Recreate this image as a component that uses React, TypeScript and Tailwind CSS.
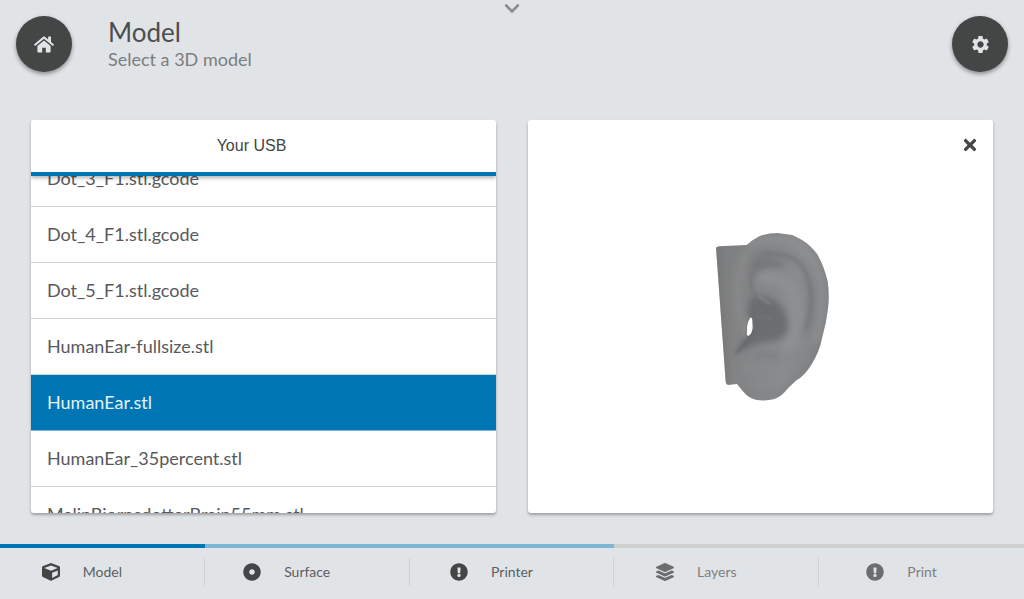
import { useEffect, useRef, useState } from "react";
import type { IconType } from "react-icons";
import {
  FaChevronDown,
  FaCube,
  FaDotCircle,
  FaExclamationCircle,
  FaLayerGroup,
  FaTimes,
} from "react-icons/fa";
import { MdSettings } from "react-icons/md";

const files = [
  "Dot_3_F1.stl.gcode",
  "Dot_4_F1.stl.gcode",
  "Dot_5_F1.stl.gcode",
  "HumanEar-fullsize.stl",
  "HumanEar.stl",
  "HumanEar_35percent.stl",
  "MalinBjornsdotterBrain55mm.stl",
];

type Step = {
  label: string;
  icon: IconType;
  bar: string;
  iconTone: string;
  textTone: string;
};

const active = { iconTone: "text-[#444645]", textTone: "text-[#5c5e5f]" };
const pending = { iconTone: "text-[#6c6d6d]", textTone: "text-[#7d7f80]" };

const steps: Step[] = [
  { label: "Model", icon: FaCube, bar: "border-[#0075b4]", ...active },
  { label: "Surface", icon: FaDotCircle, bar: "border-[#7cb6d6]", ...active },
  { label: "Printer", icon: FaExclamationCircle, bar: "border-[#7cb6d6]", ...active },
  { label: "Layers", icon: FaLayerGroup, bar: "border-[#cfcfcf]", ...pending },
  { label: "Print", icon: FaExclamationCircle, bar: "border-[#cfcfcf]", ...pending },
];

function HomeIcon() {
  return (
    <svg viewBox="0 0 20 17" className="h-[17px] w-5" fill="currentColor" aria-hidden="true">
      <path d="M10 4.400 3.400 9.900v5.700c0 .5.4.9.9.9h3.900v-4.700h3.600v4.700h3.900c.5 0 .9-.4.9-.9V9.900z" />
      <path d="M19.700 8.300 17 6V1c0-.3-.2-.5-.5-.5h-1.900c-.3 0-.5.2-.5.5v2.500L11.200 1c-.7-.6-1.700-.6-2.400 0L.3 8.300c-.2.200-.2.500-.1.700l.6.700c.2.200.500.200.700.100L10 2.700l8.500 7.100c.2.100.5.100.700-.1l.6-.7c.1-.2.1-.5-.1-.7z" />
    </svg>
  );
}

function EarModel() {
  const outline =
    "M48 83Q50 80 58 79L140 75Q160 57 181 47Q208 39 232 39L277 45L305 59Q333 76 352 103Q373 141 383 184Q389 226 384 266Q379 309 366 355Q358 398 332 437Q314 466 289 481L265 503Q245 529 224 537Q198 544 170 540Q144 533 130 515L111 492L84 495Q78 494 77 485Z";
  return (
    <svg
      viewBox="-150 6 663 570"
      className="h-[190px] w-[221px]"
      role="img"
      aria-label="HumanEar.stl"
    >
      <defs>
        <linearGradient id="skin" x1="0" y1="0" x2="1" y2="0.25">
          <stop offset="0" stopColor="#7c7d7e" />
          <stop offset="0.35" stopColor="#838485" />
          <stop offset="0.75" stopColor="#8a8c8e" />
          <stop offset="1" stopColor="#828486" />
        </linearGradient>
        <filter id="soft" x="-40%" y="-40%" width="180%" height="180%">
          <feGaussianBlur stdDeviation="10" />
        </filter>
        <filter id="fine" x="-40%" y="-40%" width="180%" height="180%">
          <feGaussianBlur stdDeviation="4" />
        </filter>
        <clipPath id="ear">
          <path d={outline} />
        </clipPath>
      </defs>
      <path d={outline} fill="url(#skin)" />
      <g clipPath="url(#ear)">
        <g filter="url(#soft)" fill="none" opacity="0.85">
          <path d="M52 84L80 492" stroke="#747576" strokeWidth="12" />
          <path d="M150 84Q120 110 116 190Q112 260 130 330" stroke="#88898a" strokeWidth="28" />
          <path d="M150 76Q230 38 296 74Q350 116 366 200Q372 280 345 370" stroke="#8f9193" strokeWidth="18" />
          <path d="M154 165Q155 105 200 102Q260 98 294 128Q330 166 334 242Q332 312 296 376" stroke="#747577" strokeWidth="10" />
          <path d="M166 122Q216 105 260 132Q246 150 206 142Q178 150 164 168Z" fill="#737476" />
          <path d="M176 178Q232 158 271 204Q299 250 288 326Q282 376 258 397" stroke="#8f9193" strokeWidth="36" />
          <path d="M146 239Q174 214 224 239Q268 270 264 330Q246 370 188 366Q148 378 112 397L142 338Q138 286 146 239Z" fill="#68696b" />
          <path d="M126 434Q174 460 240 430Q290 410 321 350" stroke="#88898a" strokeWidth="24" />
          <path d="M170 408Q202 400 240 411" stroke="#7c7d7e" strokeWidth="14" />
          <path d="M116 494Q180 552 254 510Q320 460 366 365" stroke="#7e7f81" strokeWidth="12" />
        </g>
        <g filter="url(#fine)" fill="none" strokeLinecap="round" opacity="0.8">
          <path d="M190 102Q264 96 300 130Q336 168 333 247Q332 288 318 325" stroke="#707274" strokeWidth="5" />
          <path d="M155 162Q148 202 165 220Q176 232 192 250" stroke="#6c6d6f" strokeWidth="5" />
          <path d="M176 228Q190 238 208 250" stroke="#868788" strokeWidth="9" />
          <path d="M165 289Q197 287 217 301" stroke="#757678" strokeWidth="8" />
          <path d="M158 338Q139 372 109 397" stroke="#646567" strokeWidth="9" />
          <path d="M141 289Q128 321 134 351" stroke="#8e8f8f" strokeWidth="8" />
        </g>
      </g>
      <path d="M151 293Q157 291 157 303L158 323Q157 339 145 348Q139 347 141 334Q140 307 151 293Z" fill="#fff" />
    </svg>
  );
}

export default function App() {
  const listRef = useRef<HTMLUListElement>(null);
  const [selected, setSelected] = useState("HumanEar.stl");

  useEffect(() => {
    if (listRef.current) listRef.current.scrollTop = 25;
  }, []);

  const roundButton =
    "flex size-14 shrink-0 items-center justify-center rounded-full bg-[#444645] text-[#e1e4e7] shadow-[0_2px_4px_rgba(0,0,0,0.4)]";

  return (
    <div className="flex h-screen flex-col overflow-hidden bg-[#e1e4e7] font-['Lato',sans-serif] text-[#444645]">
      <header className="relative flex items-start px-4 pt-4 pb-12">
        <button type="button" aria-label="Home" className={roundButton}>
          <HomeIcon />
        </button>
        <div className="ml-9 flex-1">
          <h1 className="text-[26px] leading-8 text-[#4c4e4f]">Model</h1>
          <p className="text-lg leading-[22px] text-[#7b7d7e]">Select a 3D model</p>
        </div>
        <button type="button" aria-label="Settings" className={roundButton}>
          <MdSettings size={21} />
        </button>
        <button
          type="button"
          aria-label="Show notifications"
          className="absolute top-0 left-1/2 -translate-x-1/2 text-[#8c8d8e]"
        >
          <FaChevronDown size={17} />
        </button>
      </header>

      <main className="grid min-h-0 flex-1 grid-cols-2 gap-8 px-[31px] pb-[31px]">
        <section className="flex min-h-0 flex-col overflow-hidden rounded-[3px] bg-white shadow-[0_2px_3px_rgba(0,0,0,0.3)]">
          <h2 className="z-10 flex h-14 shrink-0 items-center justify-center border-b-4 border-[#0075b4] bg-white pr-6 font-['Liberation_Sans',sans-serif] text-base shadow-[0_2px_4px_rgba(0,0,0,0.3)]">
            Your USB
          </h2>
          <ul
            ref={listRef}
            className="min-h-0 flex-1 overflow-y-auto [scrollbar-width:none]"
          >
            {files.map((file) => (
              <li key={file}>
                <button
                  type="button"
                  aria-pressed={file === selected}
                  onClick={() => setSelected(file)}
                  className={
                    file === selected
                      ? "block h-14 w-full border-b border-[#7cb6d6] bg-[#0075b4] px-4 pb-0.5 text-left text-lg text-[#e6f2f8]"
                      : "block h-14 w-full border-b border-[#d3d4d5] px-4 pb-0.5 text-left text-lg text-[#58595b]"
                  }
                >
                  {file}
                </button>
              </li>
            ))}
          </ul>
        </section>

        <section className="relative flex min-h-0 items-center justify-center rounded-[3px] bg-white shadow-[0_2px_3px_rgba(0,0,0,0.3)]">
          <EarModel />
          <button type="button" aria-label="Close preview" className="absolute top-4 right-[14px]">
            <FaTimes size={18} />
          </button>
        </section>
      </main>

      <nav className="grid shrink-0 grid-cols-5">
        {steps.map((step, i) => (
          <a
            key={step.label}
            href={`#${step.label.toLowerCase()}`}
            className={`border-t-4 pt-[10px] pb-[13px] ${step.bar}`}
          >
            <span
              className={`flex h-7 items-center justify-center gap-[23px] pr-10 text-sm ${step.textTone} ${
                i < steps.length - 1 ? "border-r border-[#cfd1d3]" : ""
              }`}
            >
              <step.icon size={18} className={step.iconTone} />
              {step.label}
            </span>
          </a>
        ))}
      </nav>
    </div>
  );
}
